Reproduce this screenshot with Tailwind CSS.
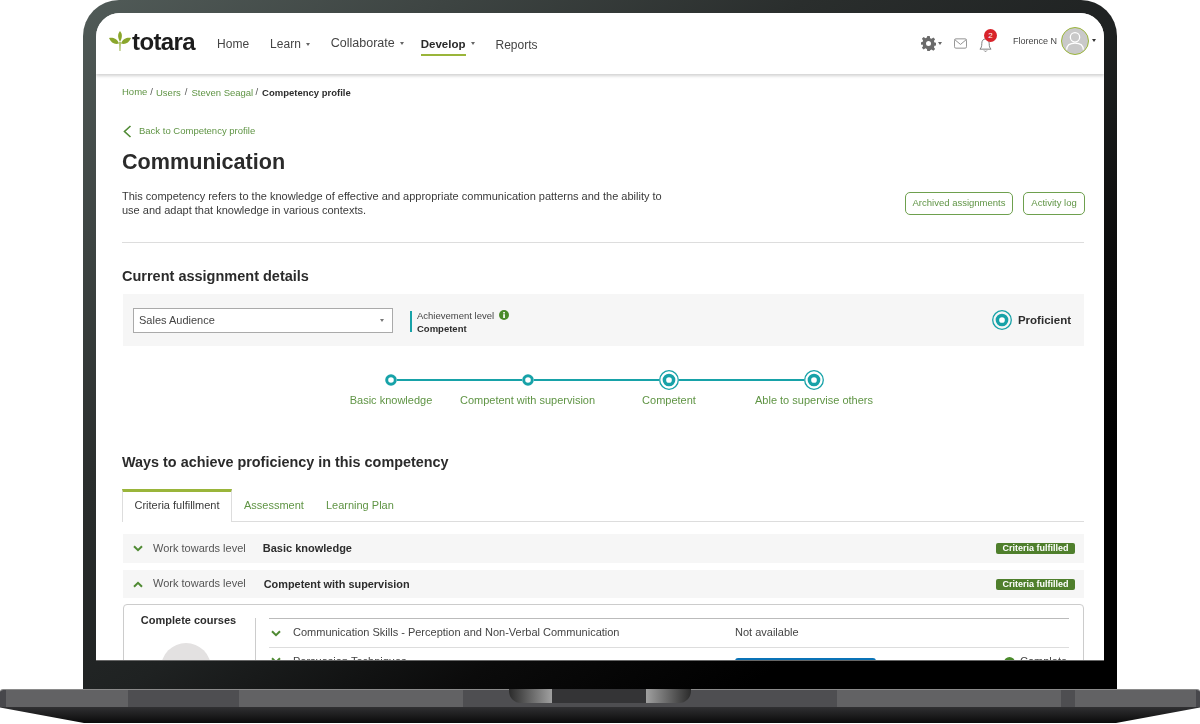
<!DOCTYPE html>
<html lang="en">
<head>
    <meta charset="UTF-8">
    <title>Competency profile</title>
    <script src="https://cdn.jsdelivr.net/npm/@tailwindcss/browser@4"></script>
</head>
<body class="bg-white w-[1200px] h-[724px] overflow-hidden font-['Liberation_Sans',Arial,sans-serif] text-[#333]">
    <!-- laptop lid -->
    <div class="mx-[83px] h-[689px] pt-[13px] px-[13px] rounded-t-[36px] bg-[linear-gradient(to_bottom_right,#515b58_0%,#2a2e2d_35%,#1f2222_52%,#0b0b0b_68%,#000_82%)]">
        <div class="h-[648px] rounded-t-[24px] bg-white overflow-hidden border-b border-[#666] blur-[0.3px]">
            <!-- top nav -->
            <header class="h-[61px] flex items-center pl-[13px] pr-[8px] bg-white shadow-[0_2px_3px_rgba(0,0,0,0.18)] relative">
                <svg class="w-[22px] h-[21px] mt-[-4px]" viewBox="0 0 22 21">
                    <path d="M11 0C8.500 3 8.500 6.500 11 11C13.500 6.500 13.500 3 11 0Z" fill="#8aa62c"/>
                    <path d="M0 7C3 6 8 7 10 12.500C6 14 2 12 0 7Z" fill="#8aa62c"/>
                    <path d="M22 7C19 6 14 7 12 12.500C16 14 20 12 22 7Z" fill="#8aa62c"/>
                    <path d="M10.300 11H11.700L11.400 20H10.600Z" fill="#8aa62c"/>
                </svg>
                <span class="ml-[1px] mt-[-4px] text-[24px] leading-none font-bold text-[#1c1c1c] tracking-[-0.6px]">totara</span>
                <nav class="flex items-center ml-[22px] text-[#444]">
                    <a class="text-[12px] mt-[1px]">Home</a>
                    <a class="ml-[21px] text-[12px] mt-[1px] flex items-center">Learn<span class="ml-[5px] border-x-[2.5px] border-x-transparent border-t-[3px] border-t-[#666]"></span></a>
                    <a class="ml-[21px] text-[12.5px] flex items-center">Collaborate<span class="ml-[5px] border-x-[2.5px] border-x-transparent border-t-[3px] border-t-[#666]"></span></a>
                    <div class="ml-[17px] relative flex items-center">
                        <a class="text-[11.5px] font-bold text-[#2a2a2a] border-b-2 border-[#9ab53a] pb-[2px] mt-[6px] leading-[15px]">Develop</a>
                        <span class="ml-[5px] border-x-[2.5px] border-x-transparent border-t-[3px] border-t-[#666]"></span>
                    </div>
                    <a class="ml-[21px] text-[12px] mt-[2px]">Reports</a>
                </nav>
                <div class="ml-auto flex items-center">
                    <svg class="w-[15px] h-[15px]" viewBox="0 0 24 24" fill="#6b6b6b">
                        <path fill-rule="evenodd" d="M10 0h4l.6 3.400 2.300 1 2.900-2 2.800 2.800-2 2.900 1 2.300 3.400.6v4l-3.400.6-1 2.300 2 2.900-2.800 2.800-2.900-2-2.300 1L14 24h-4l-.6-3.400-2.300-1-2.900 2-2.800-2.800 2-2.900-1-2.300L-1 14v-4l3.400-.6 1-2.300-2-2.900 2.800-2.800 2.900 2 2.300-1zM12 8a4 4 0 100 8 4 4 0 000-8z"/>
                    </svg>
                    <span class="ml-[2px] border-x-[2.5px] border-x-transparent border-t-[3px] border-t-[#666]"></span>
                    <svg class="ml-[12px] w-[13px] h-[11px]" viewBox="0 0 14 11" fill="none" stroke="#8a8a8a" stroke-width="1">
                        <rect x=".5" y=".5" width="13" height="10" rx="1.500"/>
                        <path d="M1 1.500L7 6.500L13 1.500"/>
                    </svg>
                    <div class="ml-[12px] relative w-[14px] h-[18px] mt-[2px]">
                        <svg class="w-[13px] h-[17px]" viewBox="0 0 14 17" fill="none" stroke="#777" stroke-width="1">
                            <path d="M1 13.500C2.500 12 3 10.500 3 7.500C3 4.500 4.500 2.500 7 2.500C9.500 2.500 11 4.500 11 7.500C11 10.500 11.500 12 13 13.500Z"/>
                            <path d="M5.500 15C6 16.200 8 16.200 8.500 15"/>
                        </svg>
                        <span class="absolute left-[5px] top-[-7px] w-[13px] h-[13px] rounded-full bg-[#d8232a] text-white text-[8px] leading-[13px] text-center">2</span>
                    </div>
                    <span class="ml-[20px] mt-[-4px] text-[9px] text-[#444]">Florence N</span>
                    <div class="ml-[4px] mt-[-6px] w-[28px] h-[28px] rounded-full border-[1.5px] border-[#9ab53a] bg-[#c9c9c9] overflow-hidden">
                        <svg viewBox="0 0 25 25" class="w-full h-full" fill="none" stroke="#fff" stroke-width="1.200">
                            <circle cx="12.500" cy="9" r="4.500"/>
                            <path d="M4.500 21C4.500 16.500 8 14.500 12.500 14.500C17 14.500 20.500 16.500 20.500 21"/>
                        </svg>
                    </div>
                    <span class="ml-[3px] mt-[-6px] border-x-[2.5px] border-x-transparent border-t-[3px] border-t-[#333]"></span>
                </div>
            </header>

            <main class="pl-[26px] pr-[20px]">
                <div class="mt-[11px] text-[9.5px] leading-[14px] flex whitespace-nowrap text-[#5f9444]">
                    <a>Home</a><span class="mx-[3px] text-[#555]">/</span><a class="mt-[1px]">Users</a><span class="mx-[4px] text-[#555]">/</span><a class="mt-[1px] w-[61px]">Steven Seagal</a><span class="mx-[3px] text-[#555]">/</span><b class="text-[#2d2d2d] mt-[1px] ml-[1px]">Competency profile</b>
                </div>
                <a class="mt-[24px] flex items-center h-[14px] text-[9.5px] text-[#5f9444]">
                    <svg class="w-[9px] h-[13px] ml-[1px]" viewBox="0 0 9 13" fill="none" stroke="#4f8a33" stroke-width="1.600"><path d="M7.500 1L1.500 6.500L7.500 12"/></svg>
                    <span class="ml-[7px]">Back to Competency profile</span>
                </a>
                <h1 class="mt-[10px] text-[21.6px] leading-[28px] font-bold text-[#2b2b2b]">Communication</h1>
                <div class="mt-[13px] flex mr-[-1px]">
                    <p class="w-[560px] text-[11px] leading-[14px] text-[#3a3a3a]">This competency refers to the knowledge of effective and appropriate communication patterns and the ability to use and adapt that knowledge in various contexts.</p>
                    <div class="ml-auto flex gap-[10px] mt-[3px]">
                        <button class="w-[108px] h-[23px] border border-[#6ea04e] rounded-[5px] text-[9.5px] text-[#5f9444]">Archived assignments</button>
                        <button class="w-[62px] h-[23px] border border-[#6ea04e] rounded-[5px] text-[9.5px] text-[#5f9444]">Activity log</button>
                    </div>
                </div>
                <div class="mt-[25px] border-t border-[#ddd]"></div>
                <h2 class="mt-[24px] text-[14.5px] leading-[18px] font-bold text-[#2b2b2b]">Current assignment details</h2>

                <section class="mt-[9px] ml-[1px] h-[52px] bg-[#f6f6f6] flex items-center pl-[10px] pr-[13px]">
                    <div class="w-[260px] h-[25px] bg-white border border-[#aaa] flex items-center pl-[5px] pr-[8px] text-[11px] text-[#444]">
                        <span class="mt-[1px]">Sales Audience</span>
                        <span class="ml-auto border-x-[2.5px] border-x-transparent border-t-[3px] border-t-[#777]"></span>
                    </div>
                    <div class="ml-[17px] border-l-2 border-[#17a2a8] h-[21px] pl-[5px] text-[9.5px] leading-[13px] text-[#444] mt-[3px]">
                        <div class="mt-[-2.5px]">
                            <div class="flex items-center">Achievement level
                                <svg class="ml-[5px] w-[10px] h-[10px]" viewBox="0 0 10 10"><circle cx="5" cy="5" r="5" fill="#4a8a2a"/><rect x="4.200" y="4.200" width="1.700" height="3.800" fill="#fff"/><rect x="4.200" y="2" width="1.700" height="1.500" fill="#fff"/></svg>
                            </div>
                            <b class="text-[#2d2d2d]">Competent</b>
                        </div>
                    </div>
                    <svg class="ml-auto w-[20px] h-[20px]" viewBox="0 0 20 20"><circle cx="10" cy="10" r="9.300" fill="none" stroke="#17a2a8" stroke-width="1.300"/><circle cx="10" cy="10" r="4.600" fill="#fff" stroke="#17a2a8" stroke-width="3.500"/></svg>
                    <b class="ml-[6px] mt-[1px] text-[11.5px] text-[#2d2d2d]">Proficient</b>
                </section>

                <!-- scale -->
                <div class="mt-[24px] ml-[263px] h-[20px] flex items-center">
                    <svg class="w-[12px] h-[12px] shrink-0" viewBox="0 0 12 12"><circle cx="6" cy="6" r="4.300" fill="#fff" stroke="#17a2a8" stroke-width="3"/></svg>
                    <div class="w-[125px] h-[2px] bg-[#17a2a8]"></div>
                    <svg class="w-[12px] h-[12px] shrink-0" viewBox="0 0 12 12"><circle cx="6" cy="6" r="4.300" fill="#fff" stroke="#17a2a8" stroke-width="3"/></svg>
                    <div class="w-[125px] h-[2px] bg-[#17a2a8]"></div>
                    <svg class="w-[20px] h-[20px] shrink-0" viewBox="0 0 20 20"><circle cx="10" cy="10" r="9.300" fill="#fff" stroke="#17a2a8" stroke-width="1.300"/><circle cx="10" cy="10" r="4.600" fill="#fff" stroke="#17a2a8" stroke-width="3.500"/></svg>
                    <div class="w-[125px] h-[2px] bg-[#17a2a8]"></div>
                    <svg class="w-[20px] h-[20px] shrink-0" viewBox="0 0 20 20"><circle cx="10" cy="10" r="9.300" fill="#fff" stroke="#17a2a8" stroke-width="1.300"/><circle cx="10" cy="10" r="4.600" fill="#fff" stroke="#17a2a8" stroke-width="3.500"/></svg>
                </div>
                <div class="mt-[3px] ml-[209px] flex text-[11px] leading-[14px] text-[#5f9444] text-center">
                    <span class="w-[120px]">Basic knowledge</span>
                    <span class="w-[153px]">Competent with supervision</span>
                    <span class="w-[130px]">Competent</span>
                    <span class="w-[160px]">Able to supervise others</span>
                </div>

                <h2 class="mt-[46px] text-[14.4px] leading-[18px] font-bold text-[#2b2b2b]">Ways to achieve proficiency in this competency</h2>

                <div class="mt-[18px] flex h-[33px] border-b border-[#ddd] text-[11px]">
                    <div class="w-[110px] h-[33px] pb-[4px] border-t-[3px] border-x border-t-[#9ab53a] border-x-[#ddd] bg-white flex items-center justify-center text-[#3a3a3a]">Criteria fulfillment</div>
                    <a class="ml-[12px] flex items-center text-[#5f9444]">Assessment</a>
                    <a class="ml-[22px] flex items-center text-[#5f9444]">Learning Plan</a>
                </div>

                <div class="mt-[12px] ml-[1px] h-[29px] bg-[#f6f6f6] flex items-center pl-[10px] pr-[9px] text-[11px]">
                    <svg class="w-[10px] h-[7px]" viewBox="0 0 10 7" fill="none" stroke="#4f8a33" stroke-width="2"><path d="M1 1.200L5 5.200L9 1.200"/></svg>
                    <span class="ml-[10px] text-[#555]">Work towards level</span>
                    <b class="ml-[17px] text-[#2d2d2d]">Basic knowledge</b>
                    <span class="ml-auto w-[79px] h-[11px] rounded-[2px] bg-[#4f7f2c] text-white text-[9px] font-bold leading-[11px] text-center">Criteria fulfilled</span>
                </div>
                <div class="mt-[7px] ml-[1px] h-[28px] bg-[#f6f6f6] flex items-center pl-[10px] pr-[9px] text-[11px]">
                    <svg class="w-[10px] h-[7px]" viewBox="0 0 10 7" fill="none" stroke="#4f8a33" stroke-width="2"><path d="M1 5.800L5 1.800L9 5.800"/></svg>
                    <span class="ml-[10px] mt-[-2px] text-[#555]">Work towards level</span>
                    <b class="ml-[18px] text-[#2d2d2d] text-[10.9px]">Competent with supervision</b>
                    <span class="ml-auto w-[79px] h-[11px] rounded-[2px] bg-[#4f7f2c] text-white text-[9px] font-bold leading-[11px] text-center">Criteria fulfilled</span>
                </div>

                <!-- criteria card, cut off by the screen edge -->
                <div class="mt-[6px] ml-[1px] h-[120px] border border-[#ccc] rounded-[4px] flex">
                    <div class="w-[131px] pt-[8px] text-center">
                        <b class="block text-[11px] leading-[14px] text-[#2d2d2d] ml-[-2px]">Complete courses</b>
                        <div class="mt-[16px] ml-[37px] w-[50px] h-[50px] rounded-full bg-[#e3e1e1]"></div>
                    </div>
                    <div class="mt-[13px] w-px h-[80px] bg-[#ccc]"></div>
                    <div class="ml-[13px] w-[800px] mt-[13px] text-[11px]">
                        <div class="h-[30px] border-y border-t-[#bbb] border-b-[#ddd] flex items-center pl-[2px]">
                            <svg class="w-[10px] h-[7px]" viewBox="0 0 10 7" fill="none" stroke="#4f8a33" stroke-width="2"><path d="M1 1.200L5 5.200L9 1.200"/></svg>
                            <span class="ml-[12px] w-[442px] text-[#444] mt-[-2px]">Communication Skills - Perception and Non-Verbal Communication</span>
                            <span class="text-[#444] mt-[-2px]">Not available</span>
                        </div>
                        <div class="h-[30px] flex items-start pl-[2px] pt-[6px]">
                            <svg class="w-[10px] h-[7px] mt-[3px]" viewBox="0 0 10 7" fill="none" stroke="#4f8a33" stroke-width="2"><path d="M1 1.200L5 5.200L9 1.200"/></svg>
                            <span class="ml-[12px] w-[442px] text-[#444] leading-[14px]">Persuasion Techniques</span>
                            <div class="w-[141px] h-[13px] mt-[4px] rounded-[3px] bg-[#0a73b7] text-white text-[8px] leading-[11px] text-right pr-[8px]">100%</div>
                            <svg class="ml-[128px] mt-[3px] w-[11px] h-[11px]" viewBox="0 0 11 11"><circle cx="5.500" cy="5.500" r="5.500" fill="#4a8a2a"/></svg>
                            <span class="ml-[5px] text-[#444] leading-[14px]">Complete</span>
                        </div>
                    </div>
                </div>
            </main>
        </div>
    </div>

    <!-- laptop base -->
    <div class="h-[35px] w-[1200px] relative">
        <div class="h-[18px] flex border-t border-[#8a8a8a] rounded-tl-[3px] rounded-tr-[3px] overflow-hidden">
            <div class="w-[6px] bg-[#47474b]"></div>
            <div class="w-[122px] bg-[#626264]"></div>
            <div class="w-[111px] bg-[#4e4e51]"></div>
            <div class="w-[224px] bg-[#626264]"></div>
            <div class="w-[374px] bg-[#4e4e51]"></div>
            <div class="w-[224px] bg-[#626264]"></div>
            <div class="w-[14px] bg-[#4e4e51]"></div>
            <div class="w-[121px] bg-[#626264]"></div>
            <div class="w-[4px] bg-[#47474b]"></div>
        </div>
        <div class="h-[16px] bg-[linear-gradient(to_bottom,#303032,#0a0a0a)] [clip-path:polygon(0_0,100%_0,100%_3%,93%_100%,7%_100%,0_3%)]"></div>
        <!-- hinge notch, sits over the base -->
        <div class="absolute left-[509px] top-0 w-[182px] h-[14px] rounded-b-[12px] flex overflow-hidden">
            <div class="w-[43px] bg-[linear-gradient(to_right,#2b2b2b,#a0a0a0)]"></div>
            <div class="w-[94px] bg-[#343436]"></div>
            <div class="w-[45px] bg-[linear-gradient(to_right,#a0a0a0,#2b2b2b)]"></div>
        </div>
    </div>
</body>
</html>
